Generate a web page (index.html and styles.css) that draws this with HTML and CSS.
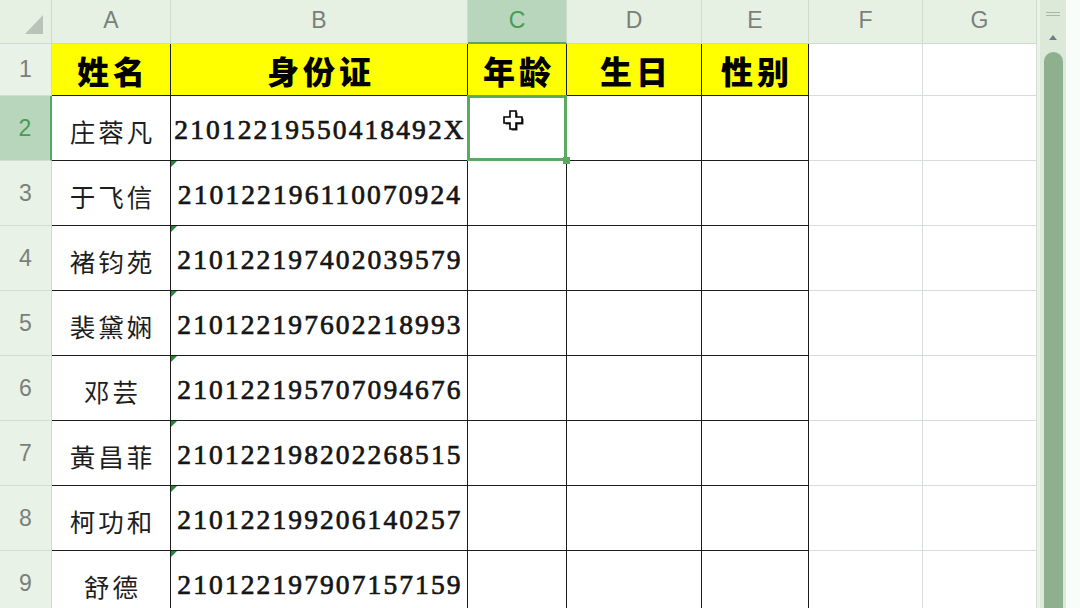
FILE: index.html
```html
<!DOCTYPE html>
<html lang="zh">
<head>
<meta charset="utf-8">
<title>Sheet</title>
<link rel="stylesheet" href="styles.css">
</head>
<body>
<div class="sheet">
  <div class="corner"><span class="corner-tri"></span></div>
  <div class="ch">A</div>
  <div class="ch">B</div>
  <div class="ch sel">C</div>
  <div class="ch">D</div>
  <div class="ch">E</div>
  <div class="ch">F</div>
  <div class="ch">G</div>
  <div class="scroll">
    <div class="grip"></div>
    <div class="arrow"></div>
    <div class="thumb"></div>
  </div>
  <div class="pad"></div>

  <div class="rh">1</div>
  <div class="c hd">姓名</div>
  <div class="c hd">身份证</div>
  <div class="c hd">年龄</div>
  <div class="c hd">生日</div>
  <div class="c hd">性别</div>
  <div class="c e"></div>
  <div class="c e"></div>

  <div class="rh sel">2</div>
  <div class="c nm">庄蓉凡</div>
  <div class="c id">21012219550418492X</div>
  <div class="c active">
    <svg class="cursor" width="24" height="24" viewBox="0 0 24 24">
      <path d="M9 3h6v6h6v6h-6v6h-6v-6h-6v-6h6z" fill="#333" transform="translate(1.5 1.5)"/>
      <path d="M9 3h6v6h6v6h-6v6h-6v-6h-6v-6h6z" fill="#fff" stroke="#000" stroke-width="1.6" stroke-linejoin="miter"/>
    </svg>
  </div>
  <div class="c"></div>
  <div class="c"></div>
  <div class="c e"></div>
  <div class="c e"></div>

  <div class="rh">3</div>
  <div class="c nm">于飞信</div>
  <div class="c id tri">210122196110070924</div>
  <div class="c"></div><div class="c"></div><div class="c"></div>
  <div class="c e"></div><div class="c e"></div>

  <div class="rh">4</div>
  <div class="c nm">褚钧苑</div>
  <div class="c id tri">210122197402039579</div>
  <div class="c"></div><div class="c"></div><div class="c"></div>
  <div class="c e"></div><div class="c e"></div>

  <div class="rh">5</div>
  <div class="c nm">裴黛娴</div>
  <div class="c id tri">210122197602218993</div>
  <div class="c"></div><div class="c"></div><div class="c"></div>
  <div class="c e"></div><div class="c e"></div>

  <div class="rh">6</div>
  <div class="c nm">邓芸</div>
  <div class="c id tri">210122195707094676</div>
  <div class="c"></div><div class="c"></div><div class="c"></div>
  <div class="c e"></div><div class="c e"></div>

  <div class="rh">7</div>
  <div class="c nm">黃昌菲</div>
  <div class="c id tri">210122198202268515</div>
  <div class="c"></div><div class="c"></div><div class="c"></div>
  <div class="c e"></div><div class="c e"></div>

  <div class="rh">8</div>
  <div class="c nm">柯功和</div>
  <div class="c id tri">210122199206140257</div>
  <div class="c"></div><div class="c"></div><div class="c"></div>
  <div class="c e"></div><div class="c e"></div>

  <div class="rh">9</div>
  <div class="c nm">舒德</div>
  <div class="c id tri">210122197907157159</div>
  <div class="c"></div><div class="c"></div><div class="c"></div>
  <div class="c e"></div><div class="c e"></div>
</div>
</body>
</html>
```

FILE: styles.css
```css
* { box-sizing: border-box; }
html, body {
  margin: 0;
  padding: 0;
  width: 1080px;
  height: 608px;
  overflow: hidden;
  background: #ffffff;
}
.sheet {
  display: grid;
  grid-template-columns: 52px 119px 297px 99px 135px 107px 114px 114px 29px 14px;
  grid-template-rows: 44px 52px repeat(8, 65px);
  font-family: "Noto Sans CJK SC", sans-serif;
}
.corner {
  background: #e6f1e4;
  border-right: 1px solid #cddccb;
  border-bottom: 1px solid #cddccb;
  position: relative;
}
.corner-tri {
  position: absolute;
  left: 25px;
  top: 15px;
  width: 0;
  height: 0;
  border-left: 18px solid transparent;
  border-bottom: 19px solid #b9c3b8;
}
.ch {
  background: #e6f1e4;
  border-right: 1px solid #cddccb;
  border-bottom: 1px solid #cddccb;
  display: flex;
  align-items: center;
  justify-content: center;
  font-family: "Liberation Sans", sans-serif;
  font-size: 23px;
  color: #7b7f7b;
  padding-bottom: 2px;
}
.ch.sel {
  background: #b7d6bc;
  color: #4a9a57;
  border-bottom: 2px solid #55a860;
}
.rh {
  background: #e8f2e6;
  border-right: 1px solid #cddccb;
  border-bottom: 1px solid #d2dfd0;
  display: flex;
  align-items: center;
  justify-content: center;
  font-family: "Liberation Sans", sans-serif;
  font-size: 23px;
  color: #7b7f7b;
}
.rh.sel {
  background: #b7d6bc;
  color: #4a9a57;
  border-right: 2px solid #55a860;
}
.scroll {
  grid-row: 1 / -1;
  grid-column: 9;
  background: #dce9d9;
  border-left: 3px solid #eaf3e8;
  display: flex;
  flex-direction: column;
  align-items: center;
  padding-top: 12px;
}
.grip {
  width: 14px;
  height: 4px;
  border-top: 1px solid #a8b8a8;
  border-bottom: 1px solid #a8b8a8;
}
.arrow {
  margin-top: 19px;
  width: 0;
  height: 0;
  border-left: 4px solid transparent;
  border-right: 4px solid transparent;
  border-bottom: 5px solid #6a7f8c;
}
.thumb {
  margin-top: 12px;
  width: 19px;
  flex: 1;
  background: #8fb08f;
  border-radius: 10px 10px 0 0;
}
.pad {
  grid-row: 1 / -1;
  grid-column: 10;
  background: #f9fdf9;
}
.c {
  border-right: 1px solid #1c1c1c;
  border-bottom: 1px solid #1c1c1c;
  display: flex;
  align-items: center;
  justify-content: center;
  position: relative;
  color: #1e1e1e;
}
.c.e {
  border-right: 1px solid #d9ddd9;
  border-bottom: 1px solid #d9ddd9;
}
.hd {
  background: #ffff00;
  font-weight: 900;
  font-size: 32px;
  letter-spacing: 4px;
  padding-left: 4px;
  color: #000;
}
.nm {
  font-size: 25.5px;
  letter-spacing: 3px;
  padding-left: 3px;
  padding-top: 4px;
}
.id {
  font-family: "Liberation Serif", serif;
  font-weight: 400;
  -webkit-text-stroke: 0.7px #151515;
  font-size: 27.5px;
  letter-spacing: 2.1px;
  padding-left: 2px;
  padding-top: 4px;
  color: #151515;
}
.tri::before {
  content: "";
  position: absolute;
  left: 0;
  top: 0;
  width: 0;
  height: 0;
  border-top: 6px solid #1e8a32;
  border-right: 6px solid transparent;
}
.active::after {
  content: "";
  position: absolute;
  left: -1px;
  top: -1px;
  right: -1px;
  bottom: -1px;
  border: 3px solid #5aaa5f;
}
.active::before {
  content: "";
  position: absolute;
  right: -4px;
  bottom: -4px;
  width: 7px;
  height: 7px;
  background: #5aaa5f;
  z-index: 2;
}
.cursor {
  position: absolute;
  left: 33px;
  top: 12px;
}
```
